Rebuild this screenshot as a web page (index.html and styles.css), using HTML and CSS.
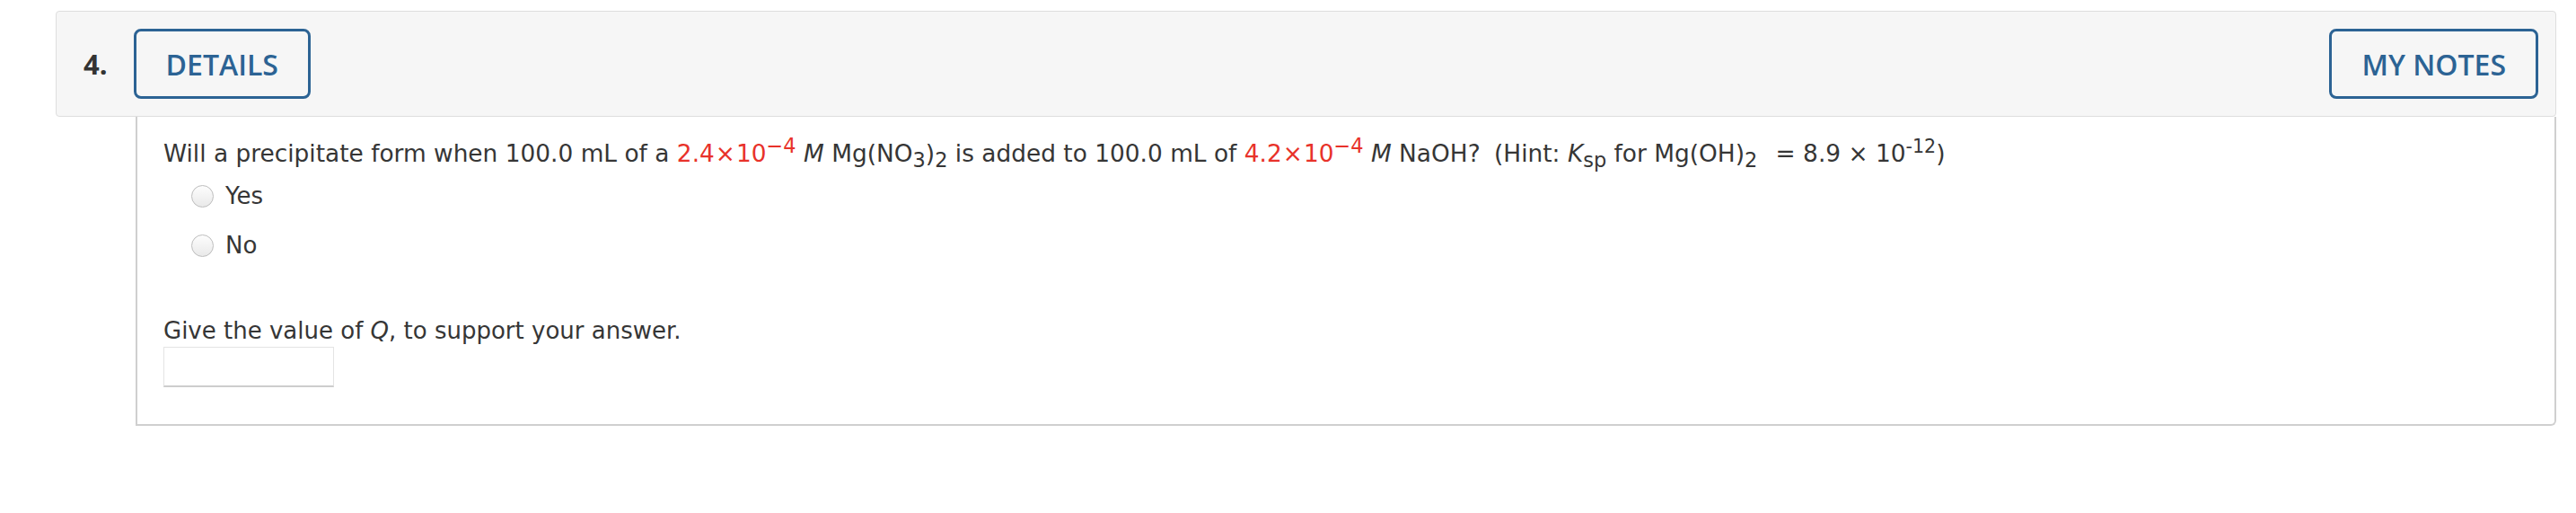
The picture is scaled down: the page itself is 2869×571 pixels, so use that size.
FILE: index.html
```html
<!DOCTYPE html>
<html lang="en">
<head>
    <meta charset="UTF-8">
    <meta name="viewport" content="width=device-width, initial-scale=1.0">
    <title>Question 4</title>
    <link rel="stylesheet" href="styles.css">
</head>
<body>
    <div class="question">
        <div class="question-header">
            <span class="question-number">4.</span>
            <button class="header-btn">DETAILS</button>
            <span class="spacer"></span>
            <button class="header-btn">MY NOTES</button>
        </div>

        <div class="question-body">
            <p class="prompt first">Will a precipitate form when 100.0 mL of a <span class="red">2.4<span class="times">×</span>10<sup>−4</sup></span> <i>M</i> Mg(NO<sub>3</sub>)<sub>2</sub> is added to 100.0 mL of <span class="red">4.2<span class="times">×</span>10<sup>−4</sup></span> <i>M</i> NaOH? <span class="hint">(Hint: <i>K</i><sub>sp</sub> for Mg(OH)<sub>2</sub> <span class="eq">=</span> 8.9 × 10<sup class="small">-12</sup>)</span></p>

            <div class="options">
                <label class="option"><input type="radio" name="q4"> Yes</label>
                <label class="option"><input type="radio" name="q4"> No</label>
            </div>

            <p class="prompt second">Give the value of <i>Q</i>, to support your answer.</p>
            <input type="text" class="answer">
        </div>
    </div>
</body>
</html>
```

FILE: styles.css
```css
body {
    margin: 0;
    background-color: #fff;
    font-family: "DejaVu Sans", Verdana, sans-serif;
    color: #363636;
}
.question {
    margin: 12px 22px 0 62px;
}
.question-header {
    display: flex;
    align-items: center;
    height: 116px;
    padding: 0 19px 0 30px;
    background-color: #f6f6f6;
    border: 1px solid #dedede;
    border-radius: 4px;
}
.question-number {
    font-family: "Open Sans", sans-serif;
    font-weight: 700;
    font-size: 31px;
    color: #333;
    margin-right: 29px;
}
.spacer {
    flex: 1;
}
.header-btn {
    height: 78px;
    padding: 0 33px;
    background-color: transparent;
    border: 3px solid #2c6394;
    border-radius: 8px;
    color: #2c6394;
    font-family: "Open Sans", sans-serif;
    font-weight: 600;
    font-size: 32px;
    cursor: pointer;
}
.question-body {
    margin-left: 89px;
    padding: 23px 30px 41px 29px;
    border: 2px solid #cfcfcf;
    border-top: none;
    border-radius: 0 0 6px 0;
}
.prompt {
    margin: 0;
    font-size: 26px;
    line-height: 36px;
    white-space: nowrap;
}
.prompt.first {
    font-size: 26.4px;
}
.prompt.second {
    margin-top: 59px;
}
.hint {
    margin-left: 7px;
}
.eq {
    margin-left: 12px;
}
.red {
    color: #e8322a;
}
.times {
    margin: 0 1px;
}
sup, sub {
    line-height: 0;
    font-size: 0.85em;
}
sup.small {
    font-size: 0.78em;
}
.options {
    display: flex;
    flex-direction: column;
    gap: 19px;
    margin: 11px 0 0 31px;
}
.option {
    display: flex;
    align-items: center;
    gap: 13px;
    height: 36px;
    font-size: 26px;
}
.option input {
    appearance: none;
    -webkit-appearance: none;
    margin: 0;
    width: 25px;
    height: 25px;
    border: 1px solid #bdbdbd;
    border-radius: 50%;
    background: linear-gradient(#fdfdfd, #e9e9e9);
}
.answer {
    display: block;
    box-sizing: border-box;
    width: 190px;
    height: 45px;
    margin: 0;
    border: 1px solid #e4e4e4;
    border-bottom: 2px solid #cdcdcd;
    background-color: #fff;
}
```
